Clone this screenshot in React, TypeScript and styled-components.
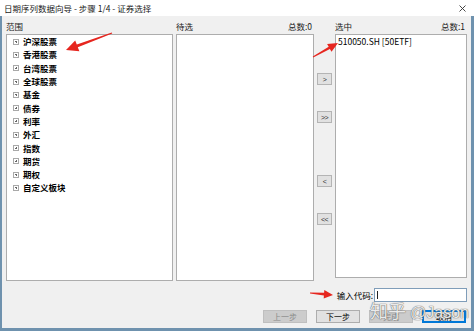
import React from "react";
import styled, { createGlobalStyle } from "styled-components";

const Global = createGlobalStyle`
  html, body { margin: 0; padding: 0; background: #ffffff; }
  * { box-sizing: border-box; }
  body { font-family: "Noto Sans CJK SC", "Liberation Sans", sans-serif; }
`;

const Window = styled.div`
  position: relative;
  width: 474px;
  height: 331px;
  display: flex;
  flex-direction: column;
  overflow: hidden;
  font-family: "Noto Sans CJK SC", "Liberation Sans", sans-serif;
  font-size: 8.5px;
  color: #000;
`;

const TitleBar = styled.div`
  height: 16px;
  flex: none;
  background: #ffffff;
  display: flex;
  align-items: center;
  justify-content: space-between;
  padding: 0 8px 0 4px;
`;

const Title = styled.span`
  font-size: 8.5px;
  line-height: 12px;
  color: #1a1a1a;
  white-space: pre;
`;

const Close = styled.svg`
  width: 7px;
  height: 7px;
  display: block;
`;

const Body = styled.div`
  flex: 1;
  background: #f0f0f0;
  border-left: 2px solid #6f92ae;
  border-right: 3px solid #6f92ae;
  border-bottom: 3px solid #6f92ae;
  padding: 4px 4px 5px 4px;
  display: flex;
  flex-direction: column;
`;

const Panels = styled.div`
  display: grid;
  grid-template-columns: 167px 138px 15px 132px;
  column-gap: 3px;
  align-items: start;
`;

const Panel = styled.div`
  display: flex;
  flex-direction: column;
`;

const PanelHead = styled.div`
  height: 12px;
  margin-bottom: 2px;
  display: flex;
  align-items: center;
  justify-content: space-between;
  padding-right: 2px;
  line-height: 12px;
  color: #1a1a1a;
`;

const ListBox = styled.div<{ $h: number }>`
  height: ${(p) => p.$h}px;
  background: #ffffff;
  border: 1px solid #adadad;
  padding: 0 1px;
`;

const TreeRow = styled.div`
  height: 13.3px;
  display: flex;
  align-items: center;
  padding-left: 5px;
  gap: 4px;
  font-weight: 700;
  line-height: 13px;
  white-space: nowrap;
`;

const Expander = styled.span`
  position: relative;
  width: 6px;
  height: 6px;
  border: 1px solid #a9a9a9;
  flex: none;
  &::before {
    content: "";
    position: absolute;
    left: 1px;
    top: 1.5px;
    width: 2px;
    height: 1px;
    background: #666;
  }
  &::after {
    content: "";
    position: absolute;
    left: 1.5px;
    top: 1px;
    width: 1px;
    height: 2px;
    background: #666;
  }
`;

const ItemRow = styled.div`
  height: 13.3px;
  line-height: 13px;
  padding-left: 1px;
  white-space: nowrap;
`;

const TransferCol = styled.div`
  display: flex;
  flex-direction: column;
  padding-top: 53px;
  gap: 52px;
`;

const TransferGroup = styled.div`
  display: flex;
  flex-direction: column;
  gap: 26px;
`;

const SmallBtn = styled.div`
  width: 15px;
  height: 12px;
  background: #e1e1e1;
  border: 1px solid #b4b4b4;
  display: flex;
  align-items: center;
  justify-content: center;
  font-family: "Liberation Sans", sans-serif;
  font-size: 7px;
  color: #333;
  letter-spacing: -0.5px;
`;

const InputRow = styled.div`
  margin-top: 7px;
  height: 14px;
  display: flex;
  justify-content: flex-end;
  align-items: center;
  gap: 1px;
`;

const InputLabel = styled.span`
  font-size: 8.5px;
  line-height: 12px;
`;

const CodeInput = styled.div`
  width: 93px;
  height: 14px;
  background: #fff;
  border: 1px solid #7f9db9;
  position: relative;
  &::after {
    content: "";
    position: absolute;
    left: 2px;
    top: 2px;
    width: 1px;
    height: 8px;
    background: #222;
  }
`;

const ButtonRow = styled.div`
  margin-top: 8px;
  height: 13px;
  display: flex;
  justify-content: flex-end;
  gap: 9px;
  padding-right: 1px;
`;

const DlgButton = styled.div<{ $disabled?: boolean; $default?: boolean }>`
  width: 44px;
  height: 13px;
  display: flex;
  align-items: center;
  justify-content: center;
  font-size: 8px;
  line-height: 11px;
  background: ${(p) => (p.$disabled ? "#cccccc" : "#e1e1e1")};
  color: ${(p) => (p.$disabled ? "#8a8a8a" : "#000")};
  border: 1px solid
    ${(p) => (p.$default ? "#0078d7" : p.$disabled ? "#bfbfbf" : "#adadad")};
  box-shadow: ${(p) => (p.$default ? "inset 0 0 0 1px #0078d7" : "none")};
`;

const Overlay = styled.svg`
  position: absolute;
  left: 0;
  top: 0;
  width: 474px;
  height: 331px;
  pointer-events: none;
`;

const Watermark = styled.div`
  position: absolute;
  left: 370px;
  top: 298px;
  font-family: "Noto Sans CJK SC", sans-serif;
  font-size: 18px;
  line-height: 24px;
  color: rgba(255, 255, 255, 0.88);
  text-shadow: 0 0 1px #555, 0 0 1px #777;
  white-space: nowrap;
  pointer-events: none;
`;

const WmLatin = styled.span`
  font-family: "Liberation Sans", sans-serif;
  font-size: 16px;
`;

const tree = [
  "沪深股票",
  "香港股票",
  "台湾股票",
  "全球股票",
  "基金",
  "债券",
  "利率",
  "外汇",
  "指数",
  "期货",
  "期权",
  "自定义板块",
];

export default function App() {
  return (
    <>
      <Global />
      <Window>
        <TitleBar>
          <Title>日期序列数据向导 - 步骤 1/4 - 证券选择</Title>
          <Close viewBox="0 0 7 7">
            <path d="M0.5 0.5 L6.5 6.5 M6.5 0.5 L0.5 6.5" stroke="#333" strokeWidth="0.9" />
          </Close>
        </TitleBar>
        <Body>
          <Panels>
            <Panel>
              <PanelHead>
                <span>范围</span>
              </PanelHead>
              <ListBox $h={247}>
                {tree.map((t) => (
                  <TreeRow key={t}>
                    <Expander />
                    <span>{t}</span>
                  </TreeRow>
                ))}
              </ListBox>
            </Panel>
            <Panel>
              <PanelHead>
                <span>待选</span>
                <span>总数:0</span>
              </PanelHead>
              <ListBox $h={247} />
            </Panel>
            <TransferCol>
              <TransferGroup>
                <SmallBtn>&gt;</SmallBtn>
                <SmallBtn>&gt;&gt;</SmallBtn>
              </TransferGroup>
              <TransferGroup>
                <SmallBtn>&lt;</SmallBtn>
                <SmallBtn>&lt;&lt;</SmallBtn>
              </TransferGroup>
            </TransferCol>
            <Panel>
              <PanelHead>
                <span>选中</span>
                <span>总数:1</span>
              </PanelHead>
              <ListBox $h={244}>
                <ItemRow>510050.SH [50ETF]</ItemRow>
              </ListBox>
            </Panel>
          </Panels>
          <InputRow>
            <InputLabel>输入代码:</InputLabel>
            <CodeInput />
          </InputRow>
          <ButtonRow>
            <DlgButton $disabled>上一步</DlgButton>
            <DlgButton>下一步</DlgButton>
            <DlgButton $disabled>完成</DlgButton>
            <DlgButton $default>取消</DlgButton>
          </ButtonRow>
        </Body>
        <Watermark>
          知乎 <WmLatin>@Jason</WmLatin>
        </Watermark>
        <Overlay viewBox="0 0 474 331">
          <polygon
            fill="#e6261f"
            points="111.8,32.5 76.8,44.4 75.2,40.4 66,50 79.4,51.2 77.8,47.2 112.2,33.5"
          />
          <polygon
            fill="#e6261f"
            points="313.2,57.4 329.9,49 331.5,51.8 338,43 327.1,44 328.7,46.8 312.8,56.6"
          />
          <polygon
            fill="#e6261f"
            points="310,293.6 323.9,295.6 323.7,298.4 333,295 324.3,290 324.1,292.8 310,292.4"
          />
        </Overlay>
      </Window>
    </>
  );
}
